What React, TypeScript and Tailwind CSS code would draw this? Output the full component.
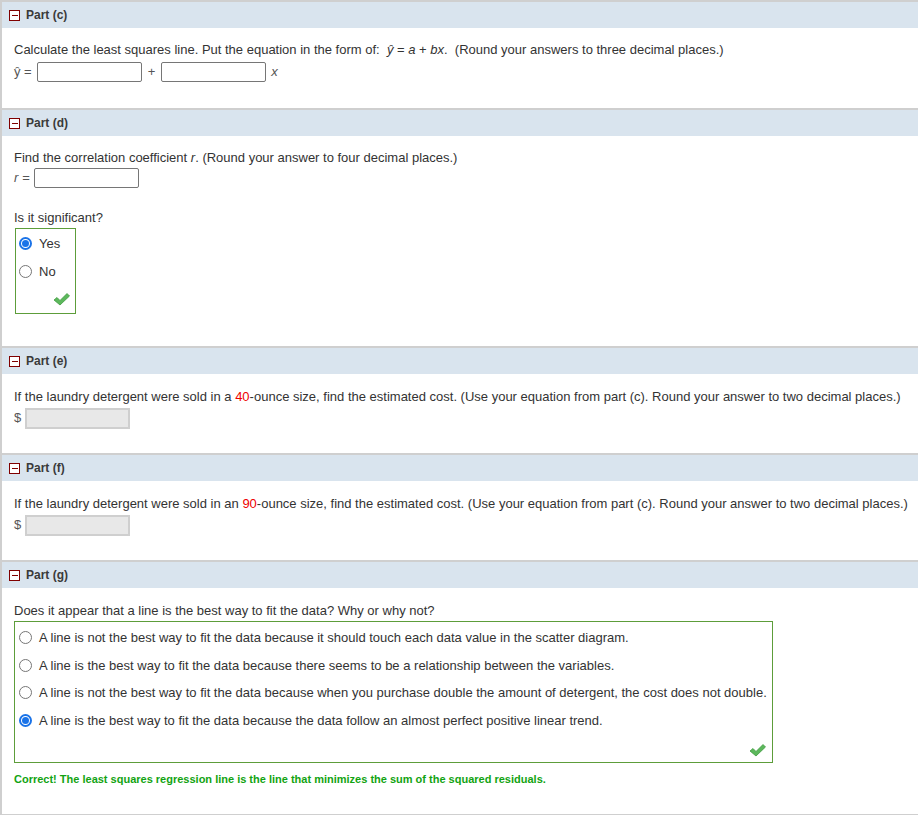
import React from 'react';

const font = { fontFamily: '"Liberation Sans", Arial, sans-serif' };

const Header: React.FC<{ label: string }> = ({ label }) => (
  <div className="flex h-[26px] items-center gap-[6px] bg-[#d9e4ee] pl-[7px] text-[12px] font-bold text-[#3a3a3a]">
    <span className="flex h-[11px] w-[11px] items-center justify-center border border-[#800000] bg-white">
      <span className="h-px w-[6px] bg-[#800000]" />
    </span>
    <span>{label}</span>
  </div>
);

const Radio: React.FC<{ checked?: boolean }> = ({ checked }) =>
  checked ? (
    <span className="flex h-[13px] w-[13px] shrink-0 items-center justify-center rounded-full border-2 border-[#1a73e8] bg-white">
      <span className="h-[7px] w-[7px] rounded-full bg-[#1a73e8]" />
    </span>
  ) : (
    <span className="h-[13px] w-[13px] shrink-0 rounded-full border border-[#767676] bg-white" />
  );

const Check: React.FC = () => (
  <svg width="17" height="14" viewBox="0 0 17 14">
    <path d="M1 8 L4 5.5 L7 8.5 L14 1.5 L16.5 4 L7 13 Z" fill="#5cb85c" stroke="#3f9a3f" strokeWidth="0.8" strokeLinejoin="round" />
  </svg>
);

const TextInput: React.FC = () => (
  <span className="inline-block h-[20px] w-[105px] rounded-[2px] border border-[#767676] bg-white" />
);

const DisabledInput: React.FC = () => (
  <span className="inline-block h-[21px] w-[105px] border-2 border-[#cfcfcf] bg-[#e8e8e8]" />
);

const options = [
  'A line is not the best way to fit the data because it should touch each data value in the scatter diagram.',
  'A line is the best way to fit the data because there seems to be a relationship between the variables.',
  'A line is not the best way to fit the data because when you purchase double the amount of detergent, the cost does not double.',
  'A line is the best way to fit the data because the data follow an almost perfect positive linear trend.',
];

export default function App() {
  return (
    <div style={font} className="w-[918px] bg-white text-[13px] text-[#333]">
      <div className="border-t-2 border-b-2 border-l-2 border-[#cfcfcf]">
        {/* Part (c) */}
        <Header label="Part (c)" />
        <div className="pl-[12px] pt-[14px] pb-[25px]">
          <div className="h-[16px] whitespace-nowrap leading-[16px]">
            Calculate the least squares line. Put the equation in the form of:&nbsp; <i>ŷ</i> = <i>a</i> + <i>bx</i>.&nbsp; (Round your answers to three decimal places.)
          </div>
          <div className="mt-[3px] flex h-[22px] items-center">
            <span className="mr-[5px] text-[#555]">ŷ =</span>
            <TextInput />
            <span className="mx-[6px] text-[#555]">+</span>
            <TextInput />
            <i className="ml-[5px] text-[#555]">x</i>
          </div>
        </div>

        {/* Part (d) */}
        <div className="border-t-2 border-[#cfcfcf]">
          <Header label="Part (d)" />
          <div className="pl-[12px] pt-[14px] pb-[32px]">
            <div className="h-[16px] leading-[16px]">
              Find the correlation coefficient <i>r</i>. (Round your answer to four decimal places.)
            </div>
            <div className="mt-[1px] flex h-[22px] items-center">
              <i className="mr-[4px] text-[#555]">r</i>
              <span className="mr-[4px] text-[#555]">=</span>
              <TextInput />
            </div>
            <div className="mt-[21px] h-[16px] leading-[16px]">Is it significant?</div>
            <div className="mt-[2px] ml-px flex h-[86px] w-[61px] flex-col border border-[#5d9d3a] px-[3px] pt-[7px] leading-[15px]">
              <div className="flex h-[15px] items-center gap-[7px]">
                <Radio checked />
                <span>Yes</span>
              </div>
              <div className="mt-[13px] flex h-[15px] items-center gap-[7px]">
                <Radio />
                <span>No</span>
              </div>
              <div className="mt-[13px] flex justify-end pr-[2px]">
                <Check />
              </div>
            </div>
          </div>
        </div>

        {/* Part (e) */}
        <div className="border-t-2 border-[#cfcfcf]">
          <Header label="Part (e)" />
          <div className="pl-[12px] pt-[15px] pb-[24px]">
            <div className="h-[16px] whitespace-nowrap leading-[16px]">
              If the laundry detergent were sold in a <span className="text-[#e00]">40</span>-ounce size, find the estimated cost. (Use your equation from part (c). Round your answer to two decimal places.)
            </div>
            <div className="mt-[2px] flex h-[22px] items-center">
              <span className="mr-[4px] text-[#555]">$</span>
              <DisabledInput />
            </div>
          </div>
        </div>

        {/* Part (f) */}
        <div className="border-t-2 border-[#cfcfcf]">
          <Header label="Part (f)" />
          <div className="pl-[12px] pt-[15px] pb-[24px]">
            <div className="h-[16px] whitespace-nowrap leading-[16px]">
              If the laundry detergent were sold in an <span className="text-[#e00]">90</span>-ounce size, find the estimated cost. (Use your equation from part (c). Round your answer to two decimal places.)
            </div>
            <div className="mt-[2px] flex h-[22px] items-center">
              <span className="mr-[4px] text-[#555]">$</span>
              <DisabledInput />
            </div>
          </div>
        </div>

        {/* Part (g) */}
        <div className="border-t-2 border-[#cfcfcf]">
          <Header label="Part (g)" />
          <div className="pl-[12px] pt-[15px] pb-[26px]">
            <div className="h-[16px] leading-[16px]">
              Does it appear that a line is the best way to fit the data? Why or why not?
            </div>
            <div className="mt-[2px] flex h-[142px] w-[759px] flex-col border border-[#5d9d3a] px-[4px] pt-[8px]">
              {options.map((o, i) => (
                <div key={i} className="flex h-[27.7px] items-start gap-[7px] pt-px">
                  <Radio checked={i === 3} />
                  <span className="leading-[14px]">{o}</span>
                </div>
              ))}
              <div className="mt-auto mb-[5px] flex justify-end pr-[2px]">
                <Check />
              </div>
            </div>
            <div className="mt-[8px] text-[11px] font-bold text-[#12a312]">
              Correct! The least squares regression line is the line that minimizes the sum of the squared residuals.
            </div>
          </div>
        </div>
      </div>
    </div>
  );
}
